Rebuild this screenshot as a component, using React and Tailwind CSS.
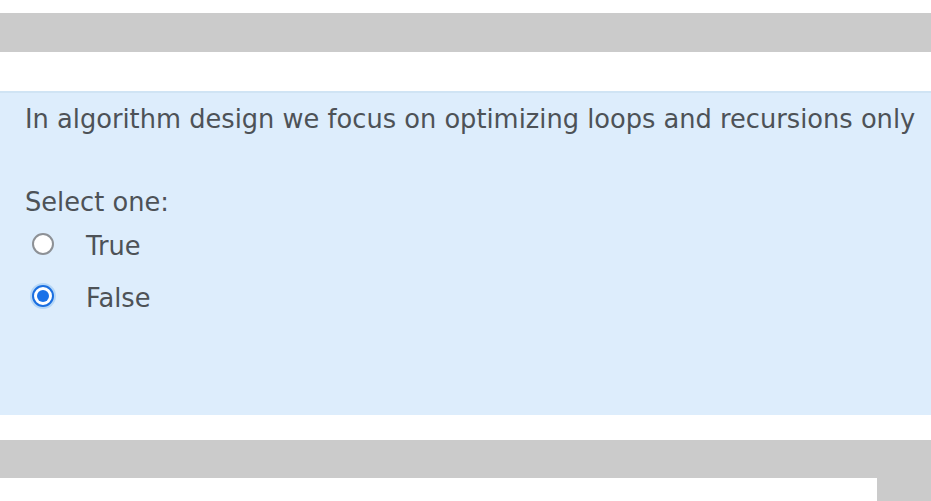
export default function App() {
  const font = { fontFamily: '"DejaVu Sans", Verdana, sans-serif' };
  return (
    <div className="w-[931px] h-[501px] bg-white overflow-hidden flex flex-col" style={font}>
      <div className="h-[13px] shrink-0" />
      <div className="h-[39px] shrink-0 bg-[#cbcbcb]" />
      <div className="h-[39px] shrink-0" />
      <div className="h-[324px] shrink-0 bg-[#ddedfc] border-t-2 border-[#d0e4f4] pl-[25px] pt-[11px] text-[#4d5257] text-[25.7px] leading-[30px]">
        <div className="whitespace-nowrap">In algorithm design we focus on optimizing loops and recursions only</div>
        <div className="mt-[53px]">Select one:</div>
        <label className="flex h-[30px] mt-[14px] pl-[7px]">
          <span className="self-start mt-[2px] w-[22px] h-[22px] rounded-full border-2 border-[#8d9196] bg-white mr-[32px]" />
          <span>True</span>
        </label>
        <label className="flex h-[30px] mt-[22px] pl-[7px]">
          <span className="self-start mt-[2px] w-[22px] h-[22px] rounded-full border-2 border-[#1b6fe0] bg-white mr-[32px] flex items-center justify-center ring-2 ring-[#b5d7f7]">
            <span className="w-[12px] h-[12px] rounded-full bg-[#1a72e8]" />
          </span>
          <span>False</span>
        </label>
      </div>
      <div className="h-[25px] shrink-0" />
      <div className="h-[38px] shrink-0 bg-[#cbcbcb]" />
      <div className="flex flex-1">
        <div className="w-[877px] bg-white" />
        <div className="flex-1 bg-[#cbcbcb]" />
      </div>
    </div>
  );
}
